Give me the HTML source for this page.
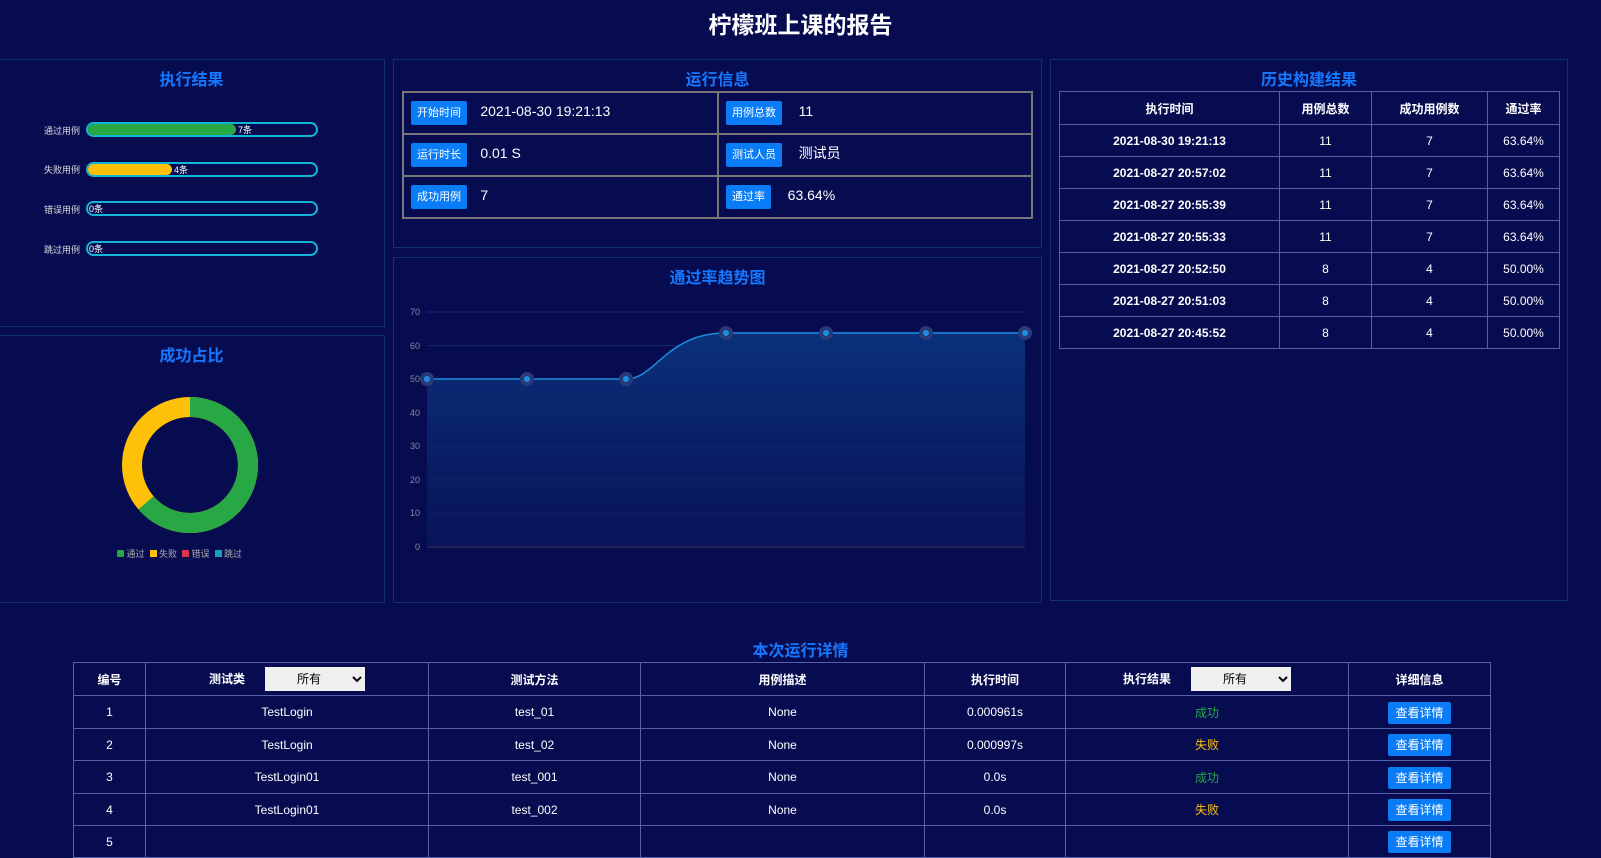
<!DOCTYPE html>
<html><head><meta charset="utf-8"><style>
*{margin:0;padding:0;box-sizing:border-box}
body{width:1601px;height:852px;overflow:hidden;background:#070c50;font-family:"Liberation Sans","Noto Sans CJK SC",sans-serif;color:#fff;position:relative}
.abs{position:absolute}
.panel{position:absolute;border:1px solid #13306a;background:#070c50}
.ptitle{position:absolute;left:0;right:0;text-align:center;color:#1677ff;font-size:16px;font-weight:bold}
table{border-collapse:collapse;position:absolute}
td,th{border:1px solid #5560a8;text-align:center;font-size:12px}
.tag{display:inline-block;background:#0a7cf5;color:#fff;font-size:11px;padding:0 6px;height:24px;line-height:24px;border-radius:2px;vertical-align:middle}
.bar{position:absolute;left:86px;width:232px;height:15px;border:2px solid #13b5d6;border-radius:8px}
.lbl{position:absolute;left:20px;width:60px;text-align:right;font-size:9px;color:#ddd}
.btn{background:#0a7cf5;color:#fff;font-size:12px;padding:4px 7px;border-radius:2px}
select{width:100px;height:24px;font-size:12px;text-align:center;border:none}
</style></head><body>
<div class="abs" style="left:0;right:0;top:6px;text-align:center;font-size:23px;font-weight:bold">柠檬班上课的报告</div>

<div class="panel" style="left:-2px;top:59px;width:387px;height:268px">
<div class="ptitle" style="top:6px">执行结果</div>
</div>
<div class="lbl" style="top:124px">通过用例</div>
<div class="bar" style="top:122px"><div style="width:148px;height:11px;background:#28a745;border-radius:6px"></div><span class="abs" style="left:150px;top:-1px;font-size:9px">7条</span></div>
<div class="lbl" style="top:163px">失败用例</div>
<div class="bar" style="top:162px"><div style="width:84px;height:11px;background:#ffc107;border-radius:6px"></div><span class="abs" style="left:86px;top:-1px;font-size:9px">4条</span></div>
<div class="lbl" style="top:203px">错误用例</div>
<div class="bar" style="top:201px"><span class="abs" style="left:1px;top:-1px;font-size:9px">0条</span></div>
<div class="lbl" style="top:243px">跳过用例</div>
<div class="bar" style="top:241px"><span class="abs" style="left:1px;top:-1px;font-size:9px">0条</span></div>

<div class="panel" style="left:-2px;top:335px;width:387px;height:268px">
<div class="ptitle" style="top:6px">成功占比</div>
</div>
<svg class="abs" style="left:110px;top:385px" width="160" height="160">
<circle cx="80" cy="80" r="58" fill="none" stroke="#ffc107" stroke-width="20"/>
<circle cx="80" cy="80" r="58" fill="none" stroke="#28a745" stroke-width="20" stroke-dasharray="231.9 364.4" transform="rotate(-90 80 80)"/>
</svg>
<div class="abs" style="left:117px;top:547px;font-size:9px;color:#aaa;white-space:nowrap">
<span style="display:inline-block;width:7px;height:7px;background:#28a745;border-radius:1px"></span> 通过 &nbsp;<span style="display:inline-block;width:7px;height:7px;background:#ffc107"></span> 失败 &nbsp;<span style="display:inline-block;width:7px;height:7px;background:#dc3545"></span> 错误 &nbsp;<span style="display:inline-block;width:7px;height:7px;background:#17a2b8"></span> 跳过</div>

<div class="panel" style="left:393px;top:59px;width:649px;height:189px">
<div class="ptitle" style="top:6px">运行信息</div>
</div>
<table style="left:402px;top:91px;width:631px;font-size:14px">
<tr style="height:42px"><td style="border:2px solid #777;text-align:left;padding-left:7px;width:315px"><span class="tag">开始时间</span>&nbsp;&nbsp;&nbsp;&nbsp;<span style="font-size:14px">2021-08-30 19:21:13</span></td><td style="border:2px solid #777;text-align:left;padding-left:7px"><span class="tag">用例总数</span>&nbsp;&nbsp;&nbsp;&nbsp;&nbsp;<span style="font-size:14px">11</span></td></tr>
<tr style="height:42px"><td style="border:2px solid #777;text-align:left;padding-left:7px"><span class="tag">运行时长</span>&nbsp;&nbsp;&nbsp;&nbsp;<span style="font-size:14px">0.01 S</span></td><td style="border:2px solid #777;text-align:left;padding-left:7px"><span class="tag">测试人员</span>&nbsp;&nbsp;&nbsp;&nbsp;&nbsp;<span style="font-size:14px">测试员</span></td></tr>
<tr style="height:42px"><td style="border:2px solid #777;text-align:left;padding-left:7px"><span class="tag">成功用例</span>&nbsp;&nbsp;&nbsp;&nbsp;<span style="font-size:14px">7</span></td><td style="border:2px solid #777;text-align:left;padding-left:7px"><span class="tag">通过率</span>&nbsp;&nbsp;&nbsp;&nbsp;&nbsp;<span style="font-size:14px">63.64%</span></td></tr>
</table>

<div class="panel" style="left:393px;top:257px;width:649px;height:346px">
<div class="ptitle" style="top:6px">通过率趋势图</div>
</div>
<svg class="abs" style="left:393px;top:257px" width="649" height="346">
<defs><linearGradient id="g" x1="0" y1="0" x2="0" y2="1"><stop offset="0" stop-color="#0a3580" stop-opacity=".9"/><stop offset="1" stop-color="#0a1a60" stop-opacity=".6"/></linearGradient></defs>
<g stroke="#1a2a6a" stroke-width="1">
<line x1="34" x2="632" y1="55" y2="55"/><line x1="34" x2="632" y1="88.6" y2="88.6"/><line x1="34" x2="632" y1="122.1" y2="122.1"/><line x1="34" x2="632" y1="155.7" y2="155.7"/><line x1="34" x2="632" y1="189.3" y2="189.3"/><line x1="34" x2="632" y1="222.9" y2="222.9"/><line x1="34" x2="632" y1="256.4" y2="256.4"/>
</g>
<line x1="34" x2="632" y1="290" y2="290" stroke="#445" />
<g fill="#889" font-size="9" text-anchor="end" font-family="Liberation Sans">
<text x="27" y="58">70</text><text x="27" y="92">60</text><text x="27" y="125">50</text><text x="27" y="159">40</text><text x="27" y="192">30</text><text x="27" y="226">20</text><text x="27" y="259">10</text><text x="27" y="293">0</text></g>
<path d="M34 122 L233 122 C263 122 273 76 333 76 L632 76 L632 290 L34 290Z" fill="url(#g)"/>
<path d="M34 122 L233 122 C263 122 273 76 333 76 L632 76" fill="none" stroke="#1a8fe0" stroke-width="1.5"/>
<g fill="#1a8fe0" stroke="#2a3a78" stroke-width="4">
<circle cx="34" cy="122" r="5"/><circle cx="134" cy="122" r="5"/><circle cx="233" cy="122" r="5"/><circle cx="333" cy="76" r="5"/><circle cx="433" cy="76" r="5"/><circle cx="533" cy="76" r="5"/><circle cx="632" cy="76" r="5"/></g>
</svg>

<div class="panel" style="left:1050px;top:59px;width:518px;height:542px">
<div class="ptitle" style="top:6px">历史构建结果</div>
</div>
<table style="left:1059px;top:91px;width:501px">
<tr style="height:33px;font-weight:bold"><th style="width:220px">执行时间</th><th style="width:92px">用例总数</th><th style="width:116px">成功用例数</th><th>通过率</th></tr>
<tr style="height:32px"><td><b>2021-08-30 19:21:13</b></td><td>11</td><td>7</td><td>63.64%</td></tr>
<tr style="height:32px"><td><b>2021-08-27 20:57:02</b></td><td>11</td><td>7</td><td>63.64%</td></tr>
<tr style="height:32px"><td><b>2021-08-27 20:55:39</b></td><td>11</td><td>7</td><td>63.64%</td></tr>
<tr style="height:32px"><td><b>2021-08-27 20:55:33</b></td><td>11</td><td>7</td><td>63.64%</td></tr>
<tr style="height:32px"><td><b>2021-08-27 20:52:50</b></td><td>8</td><td>4</td><td>50.00%</td></tr>
<tr style="height:32px"><td><b>2021-08-27 20:51:03</b></td><td>8</td><td>4</td><td>50.00%</td></tr>
<tr style="height:32px"><td><b>2021-08-27 20:45:52</b></td><td>8</td><td>4</td><td>50.00%</td></tr>
</table>

<div class="ptitle" style="top:637px">本次运行详情</div>
<table style="left:73px;top:662px;width:1418px">
<tr style="height:33px;font-weight:bold"><th style="width:72px">编号</th><th style="width:283px">测试类 &nbsp;&nbsp;&nbsp;&nbsp;&nbsp;<select><option>所有</option></select></th><th style="width:212px">测试方法</th><th style="width:284px">用例描述</th><th style="width:141px">执行时间</th><th style="width:283px">执行结果 &nbsp;&nbsp;&nbsp;&nbsp;&nbsp;<select><option>所有</option></select></th><th>详细信息</th></tr>
<tr style="height:33px"><td>1</td><td>TestLogin</td><td>test_01</td><td>None</td><td>0.000961s</td><td style="color:#28a745">成功</td><td><span class="btn">查看详情</span></td></tr>
<tr style="height:32px"><td>2</td><td>TestLogin</td><td>test_02</td><td>None</td><td>0.000997s</td><td style="color:#ffc107">失败</td><td><span class="btn">查看详情</span></td></tr>
<tr style="height:33px"><td>3</td><td>TestLogin01</td><td>test_001</td><td>None</td><td>0.0s</td><td style="color:#28a745">成功</td><td><span class="btn">查看详情</span></td></tr>
<tr style="height:32px"><td>4</td><td>TestLogin01</td><td>test_002</td><td>None</td><td>0.0s</td><td style="color:#ffc107">失败</td><td><span class="btn">查看详情</span></td></tr>
<tr style="height:32px"><td>5</td><td></td><td></td><td></td><td></td><td></td><td><span class="btn">查看详情</span></td></tr>
</table>
</body></html>
